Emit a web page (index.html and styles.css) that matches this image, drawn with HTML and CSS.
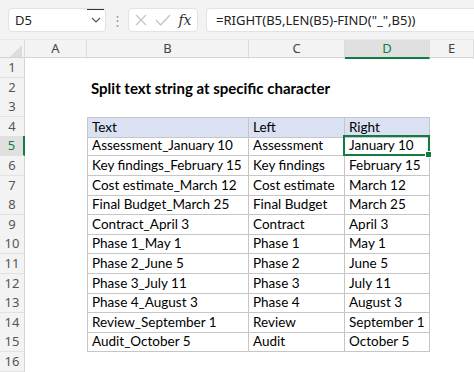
FILE: index.html
```html
<!DOCTYPE html>
<html>
    <head>
        <link rel="stylesheet" href="styles.css">
    </head>
    <body>
        <div class="formulabar">
            <div class="namebox">
                <span>D5</span>
                <div class="drop">
                    <svg width="10" height="6" viewBox="0 0 10 6"><path d="M1 1 L5 5 L9 1" fill="none" stroke="#555" stroke-width="1.2"/></svg>
                </div>
            </div>
            <div class="dots">⋮</div>
            <div class="fxbox">
                <svg width="14" height="14" viewBox="0 0 14 14"><path d="M2 2 L12 12 M12 2 L2 12" stroke="#c4c4c4" stroke-width="1.3" fill="none"/></svg>
                <svg width="16" height="14" viewBox="0 0 16 14"><path d="M1 7 L5.5 12 L15 2" stroke="#c4c4c4" stroke-width="1.3" fill="none"/></svg>
                <span class="fx">fx</span>
            </div>
            <div class="formula">=RIGHT(B5,LEN(B5)-FIND("_",B5))</div>
        </div>
        <div id="sheet"></div>

        <script>
            let rows = [
                ["Assessment_January 10","Assessment","January 10"],
                ["Key findings_February 15","Key findings","February 15"],
                ["Cost estimate_March 12","Cost estimate","March 12"],
                ["Final Budget_March 25","Final Budget","March 25"],
                ["Contract_April 3","Contract","April 3"],
                ["Phase 1_May 1","Phase 1","May 1"],
                ["Phase 2_June 5","Phase 2","June 5"],
                ["Phase 3_July 11","Phase 3","July 11"],
                ["Phase 4_August 3","Phase 4","August 3"],
                ["Review_September 1","Review","September 1"],
                ["Audit_October 5","Audit","October 5"]
            ];
            let content = `<div class="row colhead">
                <div class="corner"><svg width="12" height="12" viewBox="0 0 12 12"><path d="M12 0 L12 12 L0 12 Z" fill="#dcdcdc"/></svg></div>
                <div>A</div><div>B</div><div>C</div><div class="selcol">D</div><div>E</div>
            </div>`;
            for(let r=1;r<=16;r++){
                let cells = `<div class="rh${r==5?" selrow":""}">${r}</div><div></div>`;
                if(r==2){
                    cells += `<div class="title">Split text string at specific character</div><div></div><div></div>`;
                }else if(r==4){
                    cells += `<div class="t th first top">Text</div><div class="t th top">Left</div><div class="t th top">Right</div>`;
                }else if(r>4&&r<16){
                    let d = rows[r-5];
                    cells += `<div class="t first">${d[0]}</div><div class="t">${d[1]}</div><div class="t${r==5?" active":""}">${d[2]}</div>`;
                }else{
                    cells += `<div></div><div></div><div></div>`;
                }
                cells += `<div></div>`;
                content += `<div class="row">${cells}</div>`;
            }
            document.getElementById("sheet").innerHTML = content;
        </script>
    </body>
</html>
```

FILE: styles.css
```css
html,body {
    margin: 0;
    width: 474px;
    height: 372px;
    overflow: hidden;
    background-color: #FFFFFF;
    font-family: "Noto Sans", "Open Sans", sans-serif;
    color: #222;
}

.formulabar {
    height: 40px;
    display: flex;
    align-items: center;
    background-color: #F3F3F3;
    padding-left: 8px;
    box-sizing: border-box;
    border-bottom: 1px solid #E8E8E8;
}

.namebox {
    width: 98px;
    height: 24px;
    box-sizing: border-box;
    background-color: #FFFFFF;
    border: 1px solid #E2E2E2;
    border-radius: 4px;
    display: flex;
    align-items: center;
    justify-content: space-between;
    font-size: 13px;
    padding-left: 6px;
}

.drop {
    width: 17px;
    height: 22px;
    box-sizing: border-box;
    border-top: 1.5px solid #333;
    display: flex;
    align-items: center;
    justify-content: center;
    margin-right: 1px;
}

.dots {
    width: 22px;
    text-align: center;
    color: #999;
    font-size: 13px;
}

.fxbox {
    width: 70px;
    height: 24px;
    box-sizing: border-box;
    background-color: #FFFFFF;
    border: 1px solid #E2E2E2;
    border-radius: 4px;
    display: flex;
    align-items: center;
    justify-content: space-around;
    padding: 0 2px;
}

.fx {
    font-family: "DejaVu Serif", "Liberation Serif", serif;
    font-style: italic;
    font-size: 14px;
    color: #333;
}

.formula {
    flex: 1;
    height: 24px;
    margin-left: 8px;
    box-sizing: border-box;
    background-color: #FFFFFF;
    border: 1px solid #E2E2E2;
    border-right: none;
    border-radius: 4px 0 0 4px;
    font-size: 13px;
    line-height: 22px;
    padding-left: 9px;
    white-space: nowrap;
    color: #222;
}

.row {
    display: grid;
    grid-template-columns: 25px 62px 162px 96px 85px 44px;
    height: 19.6px;
}

.row > div {
    box-sizing: border-box;
    white-space: nowrap;
    overflow: visible;
}

.colhead {
    height: 18px;
    background-color: #F3F3F3;
    border-bottom: 1px solid #D4D4D4;
    box-sizing: border-box;
}

.colhead > div {
    text-align: center;
    font-size: 13px;
    line-height: 17px;
    color: #444;
    border-right: 1px solid #DCDCDC;
}

.corner {
    display: flex;
    align-items: flex-end;
    justify-content: flex-end;
    padding: 0 2px 2px 0;
}

.colhead .selcol {
    background-color: #E0E0E0;
    border-bottom: 2px solid #107C41;
    color: #107C41;
}

.rh {
    background-color: #F3F3F3;
    border-right: 1px solid #D4D4D4;
    border-bottom: 1px solid #E2E2E2;
    text-align: center;
    font-size: 13px;
    line-height: 19px;
    color: #555;
}

.rh.selrow {
    background-color: #E0E0E0;
    border-right: 2px solid #107C41;
    color: #107C41;
}

.title {
    font-family: "Lato", "Open Sans", sans-serif;
    font-weight: bold;
    font-size: 15px;
    line-height: 20px;
    padding-left: 4px;
    color: #000;
}

.t {
    font-family: "Lato", "Open Sans", sans-serif;
    font-size: 13.5px;
    line-height: 19px;
    padding-left: 4px;
    color: #000;
    border-right: 1px solid #C6C6C6;
    border-bottom: 1px solid #C6C6C6;
}

.t.first {
    border-left: 1px solid #C6C6C6;
}

.t.top {
    border-top: 1px solid #C6C6C6;
}

.th {
    background-color: #D9E1F2;
}

.active {
    position: relative;
}

.active::after {
    content: "";
    position: absolute;
    left: -2px;
    top: -1px;
    right: -1px;
    bottom: -1px;
    border: 2px solid #107C41;
}

.active::before {
    content: "";
    position: absolute;
    right: -3px;
    bottom: -3px;
    width: 5px;
    height: 5px;
    background-color: #107C41;
    border: 1px solid #FFFFFF;
    z-index: 2;
}
```
